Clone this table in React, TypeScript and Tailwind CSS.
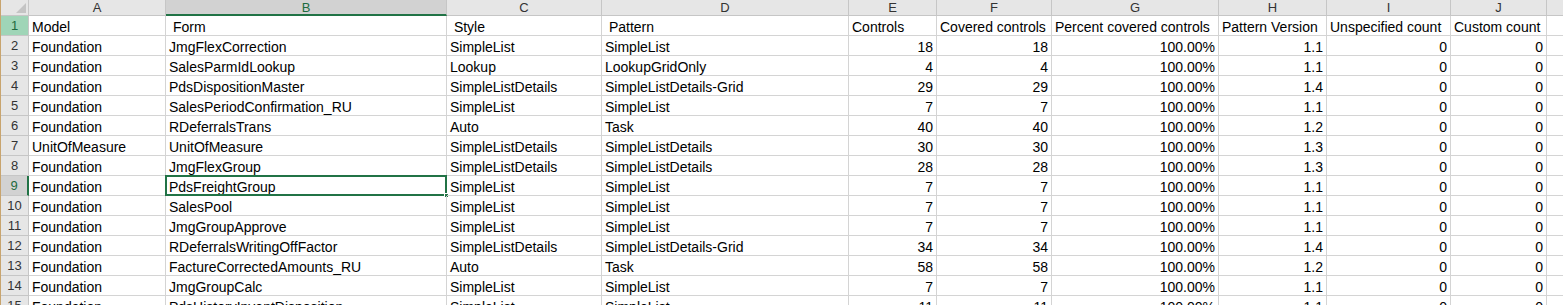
const cols = [
  { key: 'A', align: 'left' },
  { key: 'B', align: 'left' },
  { key: 'C', align: 'left' },
  { key: 'D', align: 'left' },
  { key: 'E', align: 'right' },
  { key: 'F', align: 'right' },
  { key: 'G', align: 'right' },
  { key: 'H', align: 'right' },
  { key: 'I', align: 'right' },
  { key: 'J', align: 'right' },
];

const header = [
  'Model',
  ' Form',
  ' Style',
  ' Pattern',
  'Controls',
  'Covered controls',
  'Percent covered controls',
  'Pattern Version',
  'Unspecified count',
  'Custom count',
];

const rows: string[][] = [
  ['Foundation', 'JmgFlexCorrection', 'SimpleList', 'SimpleList', '18', '18', '100.00%', '1.1', '0', '0'],
  ['Foundation', 'SalesParmIdLookup', 'Lookup', 'LookupGridOnly', '4', '4', '100.00%', '1.1', '0', '0'],
  ['Foundation', 'PdsDispositionMaster', 'SimpleListDetails', 'SimpleListDetails-Grid', '29', '29', '100.00%', '1.4', '0', '0'],
  ['Foundation', 'SalesPeriodConfirmation_RU', 'SimpleList', 'SimpleList', '7', '7', '100.00%', '1.1', '0', '0'],
  ['Foundation', 'RDeferralsTrans', 'Auto', 'Task', '40', '40', '100.00%', '1.2', '0', '0'],
  ['UnitOfMeasure', 'UnitOfMeasure', 'SimpleListDetails', 'SimpleListDetails', '30', '30', '100.00%', '1.3', '0', '0'],
  ['Foundation', 'JmgFlexGroup', 'SimpleListDetails', 'SimpleListDetails', '28', '28', '100.00%', '1.3', '0', '0'],
  ['Foundation', 'PdsFreightGroup', 'SimpleList', 'SimpleList', '7', '7', '100.00%', '1.1', '0', '0'],
  ['Foundation', 'SalesPool', 'SimpleList', 'SimpleList', '7', '7', '100.00%', '1.1', '0', '0'],
  ['Foundation', 'JmgGroupApprove', 'SimpleList', 'SimpleList', '7', '7', '100.00%', '1.1', '0', '0'],
  ['Foundation', 'RDeferralsWritingOffFactor', 'SimpleListDetails', 'SimpleListDetails-Grid', '34', '34', '100.00%', '1.4', '0', '0'],
  ['Foundation', 'FactureCorrectedAmounts_RU', 'Auto', 'Task', '58', '58', '100.00%', '1.2', '0', '0'],
  ['Foundation', 'JmgGroupCalc', 'SimpleList', 'SimpleList', '7', '7', '100.00%', '1.1', '0', '0'],
  ['Foundation', 'PdsHistoryInventDisposition', 'SimpleList', 'SimpleList', '11', '11', '100.00%', '1.1', '0', '0'],
];

const gridCols =
  'grid grid-cols-[28px_137px_281px_155px_247px_88px_115px_167px_108px_124px_96px_1fr]';

export default function App() {
  const allRows = [header, ...rows];

  return (
    <div className="h-[305px] w-full overflow-hidden bg-white font-['Liberation_Sans',Arial,sans-serif] text-[14px] text-black border-l border-[#c8a46e]">
      {/* column letters */}
      <div className={`${gridCols} h-[16px]`}>
        <div className="relative border-r border-b border-[#c6c6c6] bg-[#e6e6e6]">
          <svg className="absolute right-[2px] bottom-[2px]" width="10" height="10" viewBox="0 0 10 10">
            <polygon points="10,0 10,10 0,10" fill="#c4c4c4" />
          </svg>
        </div>
        {cols.map((c) =>
          c.key === 'B' ? (
            <div
              key={c.key}
              className="flex items-center justify-center border-r border-[#c6c6c6] border-b-2 border-b-[#217346] bg-[#d2d2d2] text-[13px] leading-none text-[#1e6b40]"
            >
              {c.key}
            </div>
          ) : (
            <div
              key={c.key}
              className="flex items-center justify-center border-r border-b border-[#c6c6c6] bg-[#e6e6e6] text-[13px] leading-none text-[#333]"
            >
              {c.key}
            </div>
          )
        )}
        <div className="border-b border-[#c6c6c6] bg-[#e6e6e6]" />
      </div>

      {allRows.map((r, ri) => {
        const n = ri + 1;
        const rowHead =
          n === 1
            ? 'bg-[#9fd5b7] text-[#1e6b40] border-r border-[#c6c6c6]'
            : n === 9
              ? 'bg-[#d2d2d2] text-[#1e6b40] border-r-2 border-r-[#217346]'
              : 'bg-[#e6e6e6] text-[#333] border-r border-[#c6c6c6]';
        return (
          <div key={n} className={`${gridCols} h-[20px]`}>
            <div
              className={`flex items-center justify-center border-b border-[#c6c6c6] text-[13px] leading-none ${rowHead}`}
            >
              {n}
            </div>
            {r.map((v, ci) => {
              const right = ri > 0 && cols[ci].align === 'right';
              const selected = n === 9 && ci === 1;
              return (
                <div
                  key={ci}
                  className={`relative flex items-center whitespace-pre overflow-visible border-r border-b border-[#d4d4d4] pt-[2px] leading-none ${
                    right ? 'justify-end pr-[3px]' : 'pl-[3px]'
                  }`}
                >
                  {v}
                  {selected && (
                    <>
                      <div className="pointer-events-none absolute -top-[1px] -left-[1px] -right-[1px] -bottom-[1px] border-2 border-[#217346]" />
                      <div className="absolute -right-[3px] -bottom-[3px] h-[5px] w-[5px] border border-white bg-[#217346]" />
                    </>
                  )}
                </div>
              );
            })}
            <div className="border-b border-[#d4d4d4]" />
          </div>
        );
      })}
    </div>
  );
}
